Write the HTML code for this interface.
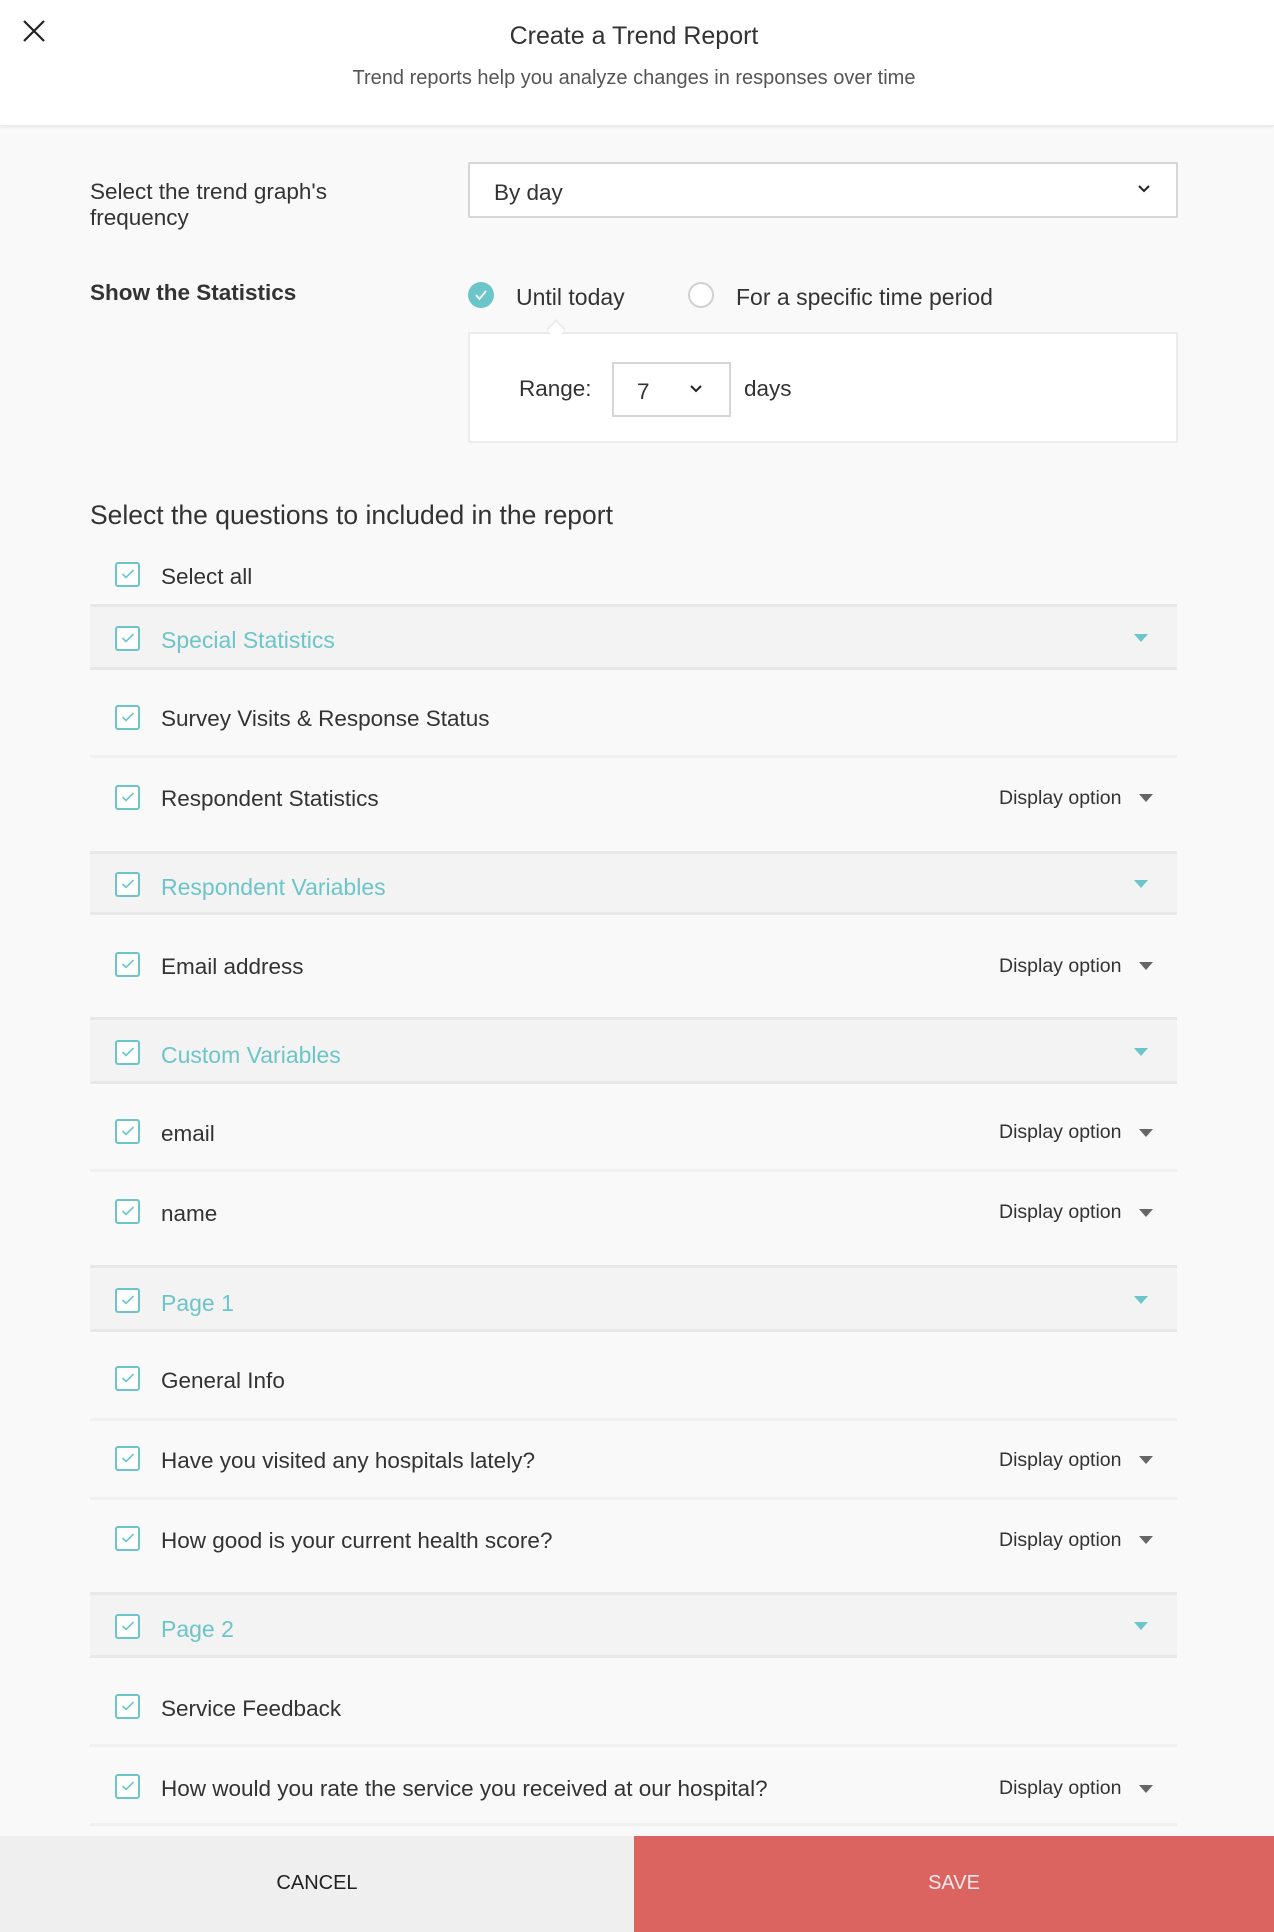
<!DOCTYPE html>
<html><head><meta charset="utf-8">
<style>
*{box-sizing:border-box;margin:0;padding:0}
body{width:1274px;height:1932px;background:#f9f9f9;font-family:"Liberation Sans",Arial,sans-serif;color:#333;position:relative;overflow:hidden}
.abs{position:absolute}
.hdr{left:0;top:0;width:1274px;height:126px;background:#fff;box-shadow:0 1px 3px rgba(0,0,0,.08);border-bottom:1px solid #ececec}
.t{white-space:nowrap}
.cb{position:absolute;left:115px;width:25px;height:25px;border:2px solid #6cc5c8;border-radius:3px;background:#fff}
.cb svg{position:absolute;left:4px;top:4px}
.rowtxt{position:absolute;left:161px;font-size:22.5px;color:#333;white-space:nowrap;margin-top:1px}
.sec{position:absolute;left:90px;width:1087px;background:#f3f3f3;border-top:3px solid #e8e8e8;border-bottom:3px solid #e8e8e8}
.div{position:absolute;left:90px;width:1087px;height:3px;background:#f0f0f0}
.sectxt{color:#6cc5c8;font-size:23px}
.tri{position:absolute;width:0;height:0;border-left:7px solid transparent;border-right:7px solid transparent}
.teal{border-top:8px solid #6cc5c8}
.grey{border-top:8px solid #666}
.disp{position:absolute;left:999px;font-size:19.5px;color:#333;white-space:nowrap;margin-top:1px}
</style></head><body>
<div class="abs hdr"></div>
<svg class="abs" style="left:22px;top:19px" width="24" height="24" viewBox="0 0 24 24"><path d="M2 2L22 22M22 2L2 22" stroke="#222" stroke-width="2.2"/></svg>
<div class="abs t" style="left:0;width:1268px;text-align:center;top:22px;font-size:25px;color:#333">Create a Trend Report</div>
<div class="abs t" style="left:0;width:1268px;text-align:center;top:67px;font-size:20px;color:#555">Trend reports help you analyze changes in responses over time</div>

<div class="abs" style="left:90px;top:179px;font-size:22.5px;line-height:26px;color:#333">Select the trend graph's<br>frequency</div>
<div class="abs" style="left:468px;top:162px;width:710px;height:56px;background:#fff;border:2px solid #d6d6d6;border-radius:2px"></div>
<div class="abs t" style="left:494px;top:180px;font-size:22.5px">By day</div>
<svg class="abs" style="left:1137px;top:184px" width="14" height="10" viewBox="0 0 14 10"><path d="M2 2L7 7L12 2" stroke="#222" stroke-width="2" fill="none"/></svg>

<div class="abs t" style="left:90px;top:280px;font-size:22.5px;font-weight:bold;color:#333">Show the Statistics</div>
<div class="abs" style="left:468px;top:282px;width:26px;height:26px;border-radius:50%;background:#6cc5c8"></div>
<svg class="abs" style="left:474px;top:289px" width="14" height="12" viewBox="0 0 14 12"><path d="M2 6L5.5 10L12 2" stroke="#fff" stroke-width="1.8" fill="none"/></svg>
<div class="abs t" style="left:516px;top:284px;font-size:23px">Until today</div>
<div class="abs" style="left:688px;top:282px;width:26px;height:26px;border-radius:50%;background:#fff;border:2px solid #d0d0d0"></div>
<div class="abs t" style="left:736px;top:284px;font-size:23px">For a specific time period</div>

<div class="abs" style="left:468px;top:332px;width:710px;height:111px;background:#fff;border:2px solid #ececec"></div>
<div class="abs" style="left:549px;top:322px;width:14px;height:14px;background:#fff;border-left:2px solid #ececec;border-top:2px solid #ececec;transform:rotate(45deg)"></div>
<div class="abs t" style="left:519px;top:376px;font-size:22.5px">Range:</div>
<div class="abs" style="left:612px;top:362px;width:119px;height:55px;background:#fff;border:2px solid #d6d6d6"></div>
<div class="abs t" style="left:637px;top:379px;font-size:22.5px">7</div>
<svg class="abs" style="left:689px;top:384px" width="14" height="10" viewBox="0 0 14 10"><path d="M2 2L7 7L12 2" stroke="#222" stroke-width="2" fill="none"/></svg>
<div class="abs t" style="left:744px;top:376px;font-size:22.5px">days</div>

<div class="abs t" style="left:90px;top:500px;font-size:26.5px;color:#333">Select the questions to included in the report</div>

<div class="cb" style="top:562px"><svg width="14" height="12" viewBox="0 0 14 12"><path d="M1.5 6L5 9.5L12.5 2" stroke="#6cc5c8" stroke-width="1.6" fill="none"/></svg></div>
<div class="rowtxt" style="top:563px">Select all</div>

<div class="sec" style="top:604px;height:66px"></div>
<div class="cb" style="top:626px"><svg width="14" height="12" viewBox="0 0 14 12"><path d="M1.5 6L5 9.5L12.5 2" stroke="#6cc5c8" stroke-width="1.6" fill="none"/></svg></div>
<div class="rowtxt sectxt" style="top:626px">Special Statistics</div>
<div class="tri teal" style="left:1134px;top:634px"></div>

<div class="cb" style="top:705px"><svg width="14" height="12" viewBox="0 0 14 12"><path d="M1.5 6L5 9.5L12.5 2" stroke="#6cc5c8" stroke-width="1.6" fill="none"/></svg></div>
<div class="rowtxt" style="top:705px">Survey Visits &amp; Response Status</div>
<div class="div" style="top:755px"></div>

<div class="cb" style="top:785px"><svg width="14" height="12" viewBox="0 0 14 12"><path d="M1.5 6L5 9.5L12.5 2" stroke="#6cc5c8" stroke-width="1.6" fill="none"/></svg></div>
<div class="rowtxt" style="top:785px">Respondent Statistics</div>
<div class="disp" style="top:786px">Display option</div>
<div class="tri grey" style="left:1139px;top:794px"></div>

<div class="sec" style="top:851px;height:64px"></div>
<div class="cb" style="top:872px"><svg width="14" height="12" viewBox="0 0 14 12"><path d="M1.5 6L5 9.5L12.5 2" stroke="#6cc5c8" stroke-width="1.6" fill="none"/></svg></div>
<div class="rowtxt sectxt" style="top:873px">Respondent Variables</div>
<div class="tri teal" style="left:1134px;top:880px"></div>

<div class="cb" style="top:952px"><svg width="14" height="12" viewBox="0 0 14 12"><path d="M1.5 6L5 9.5L12.5 2" stroke="#6cc5c8" stroke-width="1.6" fill="none"/></svg></div>
<div class="rowtxt" style="top:953px">Email address</div>
<div class="disp" style="top:954px">Display option</div>
<div class="tri grey" style="left:1139px;top:962px"></div>

<div class="sec" style="top:1017px;height:67px"></div>
<div class="cb" style="top:1040px"><svg width="14" height="12" viewBox="0 0 14 12"><path d="M1.5 6L5 9.5L12.5 2" stroke="#6cc5c8" stroke-width="1.6" fill="none"/></svg></div>
<div class="rowtxt sectxt" style="top:1041px">Custom Variables</div>
<div class="tri teal" style="left:1134px;top:1048px"></div>

<div class="cb" style="top:1119px"><svg width="14" height="12" viewBox="0 0 14 12"><path d="M1.5 6L5 9.5L12.5 2" stroke="#6cc5c8" stroke-width="1.6" fill="none"/></svg></div>
<div class="rowtxt" style="top:1120px">email</div>
<div class="disp" style="top:1120px">Display option</div>
<div class="tri grey" style="left:1139px;top:1129px"></div>
<div class="div" style="top:1169px"></div>

<div class="cb" style="top:1199px"><svg width="14" height="12" viewBox="0 0 14 12"><path d="M1.5 6L5 9.5L12.5 2" stroke="#6cc5c8" stroke-width="1.6" fill="none"/></svg></div>
<div class="rowtxt" style="top:1200px">name</div>
<div class="disp" style="top:1200px">Display option</div>
<div class="tri grey" style="left:1139px;top:1209px"></div>

<div class="sec" style="top:1265px;height:67px"></div>
<div class="cb" style="top:1288px"><svg width="14" height="12" viewBox="0 0 14 12"><path d="M1.5 6L5 9.5L12.5 2" stroke="#6cc5c8" stroke-width="1.6" fill="none"/></svg></div>
<div class="rowtxt sectxt" style="top:1289px">Page 1</div>
<div class="tri teal" style="left:1134px;top:1296px"></div>

<div class="cb" style="top:1366px"><svg width="14" height="12" viewBox="0 0 14 12"><path d="M1.5 6L5 9.5L12.5 2" stroke="#6cc5c8" stroke-width="1.6" fill="none"/></svg></div>
<div class="rowtxt" style="top:1367px">General Info</div>
<div class="div" style="top:1418px"></div>

<div class="cb" style="top:1446px"><svg width="14" height="12" viewBox="0 0 14 12"><path d="M1.5 6L5 9.5L12.5 2" stroke="#6cc5c8" stroke-width="1.6" fill="none"/></svg></div>
<div class="rowtxt" style="top:1447px">Have you visited any hospitals lately?</div>
<div class="disp" style="top:1448px">Display option</div>
<div class="tri grey" style="left:1139px;top:1456px"></div>
<div class="div" style="top:1497px"></div>

<div class="cb" style="top:1526px"><svg width="14" height="12" viewBox="0 0 14 12"><path d="M1.5 6L5 9.5L12.5 2" stroke="#6cc5c8" stroke-width="1.6" fill="none"/></svg></div>
<div class="rowtxt" style="top:1527px">How good is your current health score?</div>
<div class="disp" style="top:1528px">Display option</div>
<div class="tri grey" style="left:1139px;top:1536px"></div>

<div class="sec" style="top:1592px;height:66px"></div>
<div class="cb" style="top:1614px"><svg width="14" height="12" viewBox="0 0 14 12"><path d="M1.5 6L5 9.5L12.5 2" stroke="#6cc5c8" stroke-width="1.6" fill="none"/></svg></div>
<div class="rowtxt sectxt" style="top:1615px">Page 2</div>
<div class="tri teal" style="left:1134px;top:1622px"></div>

<div class="cb" style="top:1694px"><svg width="14" height="12" viewBox="0 0 14 12"><path d="M1.5 6L5 9.5L12.5 2" stroke="#6cc5c8" stroke-width="1.6" fill="none"/></svg></div>
<div class="rowtxt" style="top:1695px">Service Feedback</div>
<div class="div" style="top:1744px"></div>

<div class="cb" style="top:1774px"><svg width="14" height="12" viewBox="0 0 14 12"><path d="M1.5 6L5 9.5L12.5 2" stroke="#6cc5c8" stroke-width="1.6" fill="none"/></svg></div>
<div class="rowtxt" style="top:1775px">How would you rate the service you received at our hospital?</div>
<div class="disp" style="top:1776px">Display option</div>
<div class="tri grey" style="left:1139px;top:1785px"></div>
<div class="div" style="top:1823px"></div>

<div class="abs" style="left:0;top:1836px;width:634px;height:96px;background:#efefef"></div>
<div class="abs t" style="left:0;width:634px;text-align:center;top:1872px;font-size:20px;color:#222">CANCEL</div>
<div class="abs" style="left:634px;top:1836px;width:640px;height:96px;background:#db6461"></div>
<div class="abs t" style="left:634px;width:640px;text-align:center;top:1872px;font-size:20px;color:#fbeaea">SAVE</div>
</body></html>
